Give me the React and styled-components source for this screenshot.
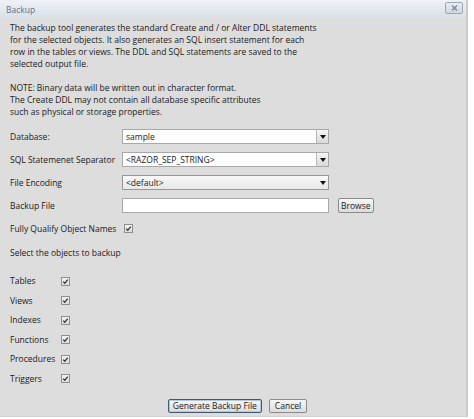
import React from "react";
import styled, { createGlobalStyle } from "styled-components";

const GlobalStyle = createGlobalStyle`
  html, body {
    margin: 0;
    padding: 0;
    background: #ffffff;
  }
  body {
    font-family: "Open Sans", "Liberation Sans", sans-serif;
  }
`;

const Dialog = styled.div`
  width: 468px;
  height: 417px;
  background: #dddddd;
  border-right: 2px solid #cbcbcb;
  border-bottom: 1px solid #d2d2d2;
  display: flex;
  flex-direction: column;
  box-sizing: border-box;
  font-size: 8.5px;
  color: #1a1a1a;
`;

const TitleBar = styled.div`
  height: 18px;
  flex: none;
  display: flex;
  align-items: center;
  justify-content: space-between;
  padding: 0 3px 0 6px;
  box-sizing: border-box;
  background: linear-gradient(#eef2f6, #d8e0e9);
  color: #617184;
  font-size: 8.5px;
`;

const CloseButton = styled.div`
  width: 16px;
  height: 10px;
  margin-top: -2px;
  border: 1px solid #9ba7b4;
  border-radius: 2px;
  background: linear-gradient(#eaeef3, #cfd7e0);
  display: flex;
  align-items: center;
  justify-content: center;
`;

const Body = styled.div`
  flex: 1;
  display: flex;
  flex-direction: column;
  padding: 4px 10px 0 10px;
`;

const Paragraph = styled.p`
  margin: 0 0 12px;
  line-height: 12px;
  &:last-of-type {
    margin-bottom: 0;
  }
`;

const FormGrid = styled.div`
  display: grid;
  grid-template-columns: 112px auto;
  grid-auto-rows: 15px;
  row-gap: 8px;
  align-items: center;
  margin-top: 11px;
`;

const Label = styled.span`
  line-height: 15px;
`;

const FieldRow = styled.div`
  display: flex;
  align-items: center;
  gap: 9px;
`;

const SelectBox = styled.div`
  width: 207px;
  height: 15px;
  box-sizing: border-box;
  border: 1px solid ${(p) => (p.$plain ? "#979797" : "#a8a8a8")};
  background: ${(p) =>
    p.$plain ? "linear-gradient(#f8f8f8, #e8e8e8)" : "#ffffff"};
  display: flex;
  align-items: stretch;
`;

const SelectText = styled.span`
  flex: 1;
  padding-left: 3px;
  line-height: 13px;
`;

const ArrowButton = styled.span`
  width: 11px;
  display: flex;
  align-items: center;
  justify-content: center;
  border-left: ${(p) => (p.$plain ? "none" : "1px solid #b8b8b8")};
  background: ${(p) =>
    p.$plain ? "transparent" : "linear-gradient(#f6f6f6, #d9d9d9)"};
`;

const TextInput = styled.div`
  width: 207px;
  height: 15px;
  box-sizing: border-box;
  border: 1px solid #a8a8a8;
  background: #ffffff;
`;

const Button = styled.button`
  font-family: inherit;
  font-size: 8.5px;
  color: #1a1a1a;
  height: ${(p) => (p.$tall ? "15px" : "14px")};
  padding: 0 ${(p) => (p.$default ? "4px" : p.$tall ? "2px" : "5px")};
  border: 1px solid ${(p) => (p.$default ? "#3f5873" : "#8a8a8a")};
  box-shadow: ${(p) => (p.$default ? "inset 0 0 0 1px #b3c8dc" : "none")};
  border-radius: 2px;
  background: linear-gradient(#f7f7f7, #dcdcdc);
  cursor: pointer;
  line-height: 11px;
`;

const CheckBox = styled.span`
  display: inline-flex;
  width: 9px;
  height: 9px;
  box-sizing: border-box;
  border: 1px solid #8f8f8f;
  background: linear-gradient(#f3f3f3, #dbdbdb);
  align-items: center;
  justify-content: center;
`;

const FormCheck = styled(CheckBox)`
  margin-left: 2px;
`;

const SectionTitle = styled.div`
  margin-top: 11px;
  line-height: 12px;
`;

const ObjectList = styled.div`
  display: grid;
  grid-template-columns: 51px auto;
  grid-auto-rows: 14px;
  row-gap: 5.6px;
  align-items: center;
  margin-top: 15px;
`;

const ObjectLabel = styled.span`
  line-height: 14px;
`;

const Footer = styled.div`
  display: flex;
  justify-content: center;
  gap: 7px;
  margin-top: 13px;
  padding-left: 9px;
`;

const Triangle = () => (
  <svg width="6" height="4" viewBox="0 0 6 4">
    <path d="M0 0 L6 0 L3 4 Z" fill="#111" />
  </svg>
);

const Check = () => (
  <svg width="7" height="7" viewBox="0 0 7 7">
    <path d="M1.2 3.6 L2.8 5.2 L5.8 1.6" stroke="#3a3a3a" strokeWidth="1.3" fill="none" />
  </svg>
);

const Select = ({ value, plain }) => (
  <SelectBox $plain={plain}>
    <SelectText>{value}</SelectText>
    <ArrowButton $plain={plain}>
      <Triangle />
    </ArrowButton>
  </SelectBox>
);

const objects = ["Tables", "Views", "Indexes", "Functions", "Procedures", "Triggers"];

export default function App() {
  return (
    <>
      <GlobalStyle />
      <Dialog>
        <TitleBar>
          <span>Backup</span>
          <CloseButton>
            <svg width="7" height="6" viewBox="0 0 7 6">
              <path d="M1 0.5 L6 5.5 M6 0.5 L1 5.5" stroke="#7d8996" strokeWidth="1.4" />
            </svg>
          </CloseButton>
        </TitleBar>
        <Body>
          <Paragraph>
            The backup tool generates the standard Create and / or Alter DDL statements
            <br />
            for the selected objects. It also generates an SQL insert statement for each
            <br />
            row in the tables or views. The DDL and SQL statements are saved to the
            <br />
            selected output file.
          </Paragraph>
          <Paragraph>
            NOTE: Binary data will be written out in character format.
            <br />
            The Create DDL may not contain all database specific attributes
            <br />
            such as physical or storage properties.
          </Paragraph>
          <FormGrid>
            <Label>Database:</Label>
            <Select value="sample" />
            <Label>SQL Statemenet Separator</Label>
            <Select value="<RAZOR_SEP_STRING>" />
            <Label>File Encoding</Label>
            <Select value="<default>" plain />
            <Label>Backup File</Label>
            <FieldRow>
              <TextInput />
              <Button $tall>Browse</Button>
            </FieldRow>
            <Label>Fully Qualify Object Names</Label>
            <FormCheck>
              <Check />
            </FormCheck>
          </FormGrid>
          <SectionTitle>Select the objects to backup</SectionTitle>
          <ObjectList>
            {objects.map((name) => (
              <React.Fragment key={name}>
                <ObjectLabel>{name}</ObjectLabel>
                <CheckBox>
                  <Check />
                </CheckBox>
              </React.Fragment>
            ))}
          </ObjectList>
          <Footer>
            <Button $default>Generate Backup File</Button>
            <Button>Cancel</Button>
          </Footer>
        </Body>
      </Dialog>
    </>
  );
}
